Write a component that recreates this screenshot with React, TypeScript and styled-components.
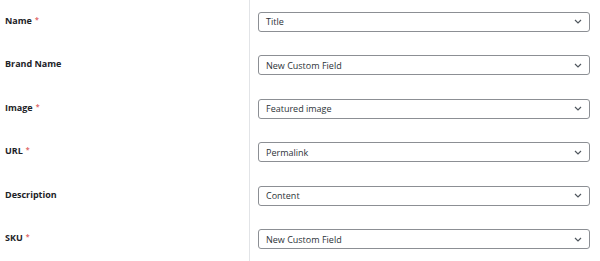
import React from 'react';
import styled, { createGlobalStyle } from 'styled-components';

const GlobalStyle = createGlobalStyle`
  html, body {
    margin: 0;
    padding: 0;
    background: #ffffff;
  }
  body {
    font-family: "Open Sans", "Noto Sans", Arial, sans-serif;
  }
`;

const Table = styled.div`
  display: grid;
  grid-template-columns: 250px 1fr;
  grid-auto-rows: 43.5px;
  width: 600px;
`;

const LabelCell = styled.div`
  display: flex;
  align-items: center;
  padding-left: 5px;
  padding-bottom: 3px;
  border-right: 1px solid #e2e4e7;
  font-size: 9px;
  font-weight: 700;
  color: #1d2327;
`;

const Required = styled.span`
  color: #e06a6b;
  font-size: 7px;
  margin-left: 3px;
  position: relative;
  top: -1px;
`;

const ValueCell = styled.div`
  display: flex;
  align-items: center;
  padding-left: 8px;
  padding-right: 10px;
`;

const Select = styled.div`
  flex: 1;
  height: 20px;
  box-sizing: border-box;
  border: 1px solid #8c8f94;
  border-radius: 3px;
  display: flex;
  align-items: center;
  justify-content: space-between;
  padding: 0 7px 0 7px;
  font-size: 9px;
  color: #2c3338;
  background: #fff;
`;

const Chevron = () => (
  <svg width="8" height="5" viewBox="0 0 8 5">
    <path d="M1 1l3 3l3-3" fill="none" stroke="#50575e" strokeWidth="1.2" />
  </svg>
);

const fields = [
  { label: 'Name', required: true, value: 'Title' },
  { label: 'Brand Name', required: false, value: 'New Custom Field' },
  { label: 'Image', required: true, value: 'Featured image' },
  { label: 'URL', required: true, value: 'Permalink' },
  { label: 'Description', required: false, value: 'Content' },
  { label: 'SKU', required: true, value: 'New Custom Field' },
];

const App = () => {
  return (
    <>
      <GlobalStyle />
      <Table>
        {fields.map((f) => (
          <React.Fragment key={f.label}>
            <LabelCell>
              {f.label}
              {f.required && <Required>*</Required>}
            </LabelCell>
            <ValueCell>
              <Select>
                <span>{f.value}</span>
                <Chevron />
              </Select>
            </ValueCell>
          </React.Fragment>
        ))}
      </Table>
    </>
  );
};

export default App;
